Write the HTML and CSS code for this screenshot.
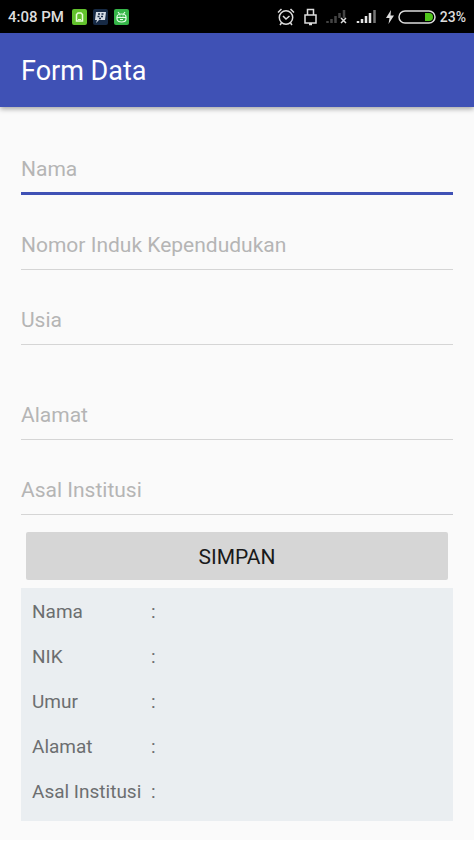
FILE: index.html
```html
<!DOCTYPE html>
<html lang="id">
<head>
<meta charset="utf-8">
<meta name="viewport" content="width=device-width, initial-scale=1">
<title>Form Data</title>
<link rel="stylesheet" href="styles.css">
</head>
<body>
<div class="status">
  <div class="status-side apps">
    <span class="clock">4:08 PM</span>
    <svg width="15" height="16" viewBox="0 0 15 16"><rect width="15" height="16" rx="2" fill="#62c22c"/><path d="M4.500 12V5.500L6 4h3l1.500 1.500V12z" fill="none" stroke="#e9ffdc" stroke-width="1.500"/><path d="M6 10.500h3" stroke="#e9ffdc"/></svg>
    <svg width="15" height="16" viewBox="0 0 15 16"><rect width="15" height="16" rx="2" fill="#172a45"/><path d="M3 3h10l-1 8H6l-3 3 1-3H2z" fill="#d5dce5"/><path d="M5 5h2M8.500 5h2M4.500 7.500h2M8 7.500h2M6 9.500h2" stroke="#172a45" stroke-width="1.300"/></svg>
    <svg width="15" height="16" viewBox="0 0 15 16"><rect width="15" height="16" rx="2" fill="#35b548"/><path d="M4 3l1.500 2M11 3L9.500 5M3 8c0-4 9-4 9 0v2c0 4-9 4-9 0zM3 8.500h9" fill="none" stroke="#e5ffe9" stroke-width="1.200"/><path d="M5.500 7h1M8.500 7h1M6 10.500h3" stroke="#e5ffe9" stroke-width="1.200"/></svg>
  </div>
  <div class="status-side">
    <svg width="18" height="18" viewBox="0 0 18 18" fill="none" stroke="#ddd" stroke-width="1.500"><circle cx="9" cy="9.500" r="6.700"/><path d="M1 4.500L4.500 1M17 4.500L13.500 1M6 8l3 3 3.500-3M4.500 15L3 17M13.500 15l1.500 2"/></svg>
    <svg class="lock" width="13" height="18" viewBox="0 0 13 18" fill="none" stroke="#ddd" stroke-width="1.500"><path d="M3.500 7V1.500h6V7M1 7h11v8H1zM5 16.500h3"/></svg>
    <svg class="nosim" width="22" height="16" viewBox="0 0 22 16"><path d="M1.500 14v-2M5.500 14v-4M9.500 14V7M13.500 9V4M18 9V1" stroke="#444" stroke-width="2.500"/><path d="M15 9l5 5M20 9l-5 5" stroke="#ddd" stroke-width="1.500"/></svg>
    <svg class="signal" width="22" height="16" viewBox="0 0 22 16"><path d="M2 14v-2M6 14v-4M10 14V7M14 14V4" stroke="#e5e5e5" stroke-width="2.500"/><path d="M18.500 14V1" stroke="#777" stroke-width="2.500"/></svg>
    <svg class="bolt" width="8" height="14" viewBox="0 0 8 14"><path d="M5 0L0 8h3.500L2.500 14 8 5.500H4.500z" fill="#ddd"/></svg>
    <svg class="battery" width="38" height="14" viewBox="0 0 38 14"><rect x="1" y="1" width="36" height="12" rx="6" fill="none" stroke="#ddd" stroke-width="1.500"/><path d="M27 3h4a4 4 0 0 1 0 8h-4z" fill="#4fc51b"/></svg>
    <span class="percent">23%</span>
  </div>
</div>
<header class="appbar"><h1>Form Data</h1></header>
<main>
  <form>
    <div class="fields">
      <input class="active" type="text" placeholder="Nama" aria-label="Nama">
      <input type="text" placeholder="Nomor Induk Kependudukan" aria-label="Nomor Induk Kependudukan">
      <input type="text" placeholder="Usia" aria-label="Usia">
    </div>
    <div class="fields">
      <input type="text" placeholder="Alamat" aria-label="Alamat">
      <input type="text" placeholder="Asal Institusi" aria-label="Asal Institusi">
    </div>
    <button type="button">SIMPAN</button>
  </form>
  <table>
    <tbody>
      <tr><th scope="row">Nama</th><td>:</td></tr>
      <tr><th scope="row">NIK</th><td>:</td></tr>
      <tr><th scope="row">Umur</th><td>:</td></tr>
      <tr><th scope="row">Alamat</th><td>:</td></tr>
      <tr><th scope="row">Asal Institusi</th><td>:</td></tr>
    </tbody>
  </table>
</main>
</body>
</html>
```
FILE: styles.css
```css
* { box-sizing: border-box; }
body {
  margin: 0;
  background: #fff;
  font-family: Roboto, "Liberation Sans", sans-serif;
}
.status {
  display: flex;
  justify-content: space-between;
  align-items: center;
  height: 33px;
  padding: 0 8px;
  background: #000;
  color: #ddd;
  font-size: 15px;
  font-weight: 500;
}
.status-side { display: flex; align-items: center; gap: 4px; }
.apps { gap: 6px; }
.clock { margin-right: 2px; }
.percent { font-size: 14px; }
.lock { margin-left: 5px; }
.nosim { margin-left: 5px; }
.signal { margin-left: 4px; }
.bolt { margin-left: 4px; }
.appbar {
  position: relative;
  display: flex;
  align-items: center;
  height: 74px;
  padding: 2px 21px 0;
  background: #3f51b5;
  color: #fff;
  box-shadow: 0 2px 5px rgba(0, 0, 0, 0.35);
}
h1 { margin: 0; font-size: 27px; font-weight: 400; }
main { padding: 34px 21px 19px; background: #fafafa; }
form { display: flex; flex-direction: column; }
.fields { display: flex; flex-direction: column; gap: 21px; margin-bottom: 41px; }
.fields + .fields { margin-bottom: 17px; }
input {
  width: 100%;
  height: 54px;
  padding: 5px 0 0;
  border: 0;
  border-bottom: 1px solid #d5d5d5;
  border-radius: 0;
  background: transparent;
  color: #222;
  font: 400 21px Roboto, "Liberation Sans", sans-serif;
  outline: 0;
}
input::placeholder { color: #b5b5b5; opacity: 1; }
input.active { border-bottom: 3px solid #3f51b5; }
button {
  height: 48px;
  margin: 0 5px 8px;
  padding: 2px 0 0;
  border: 0;
  border-radius: 2px;
  background: #d6d6d6;
  color: #1a1a1a;
  font: 400 21px Roboto, "Liberation Sans", sans-serif;
}
table {
  width: 100%;
  border-collapse: separate;
  border-spacing: 0;
  padding: 1px 11px 7px;
  background: #eaeef1;
  color: #6c6e70;
  font-size: 19px;
}
th, td { height: 45px; padding: 0; font-weight: 400; text-align: left; }
th { width: 119px; white-space: nowrap; }
```
